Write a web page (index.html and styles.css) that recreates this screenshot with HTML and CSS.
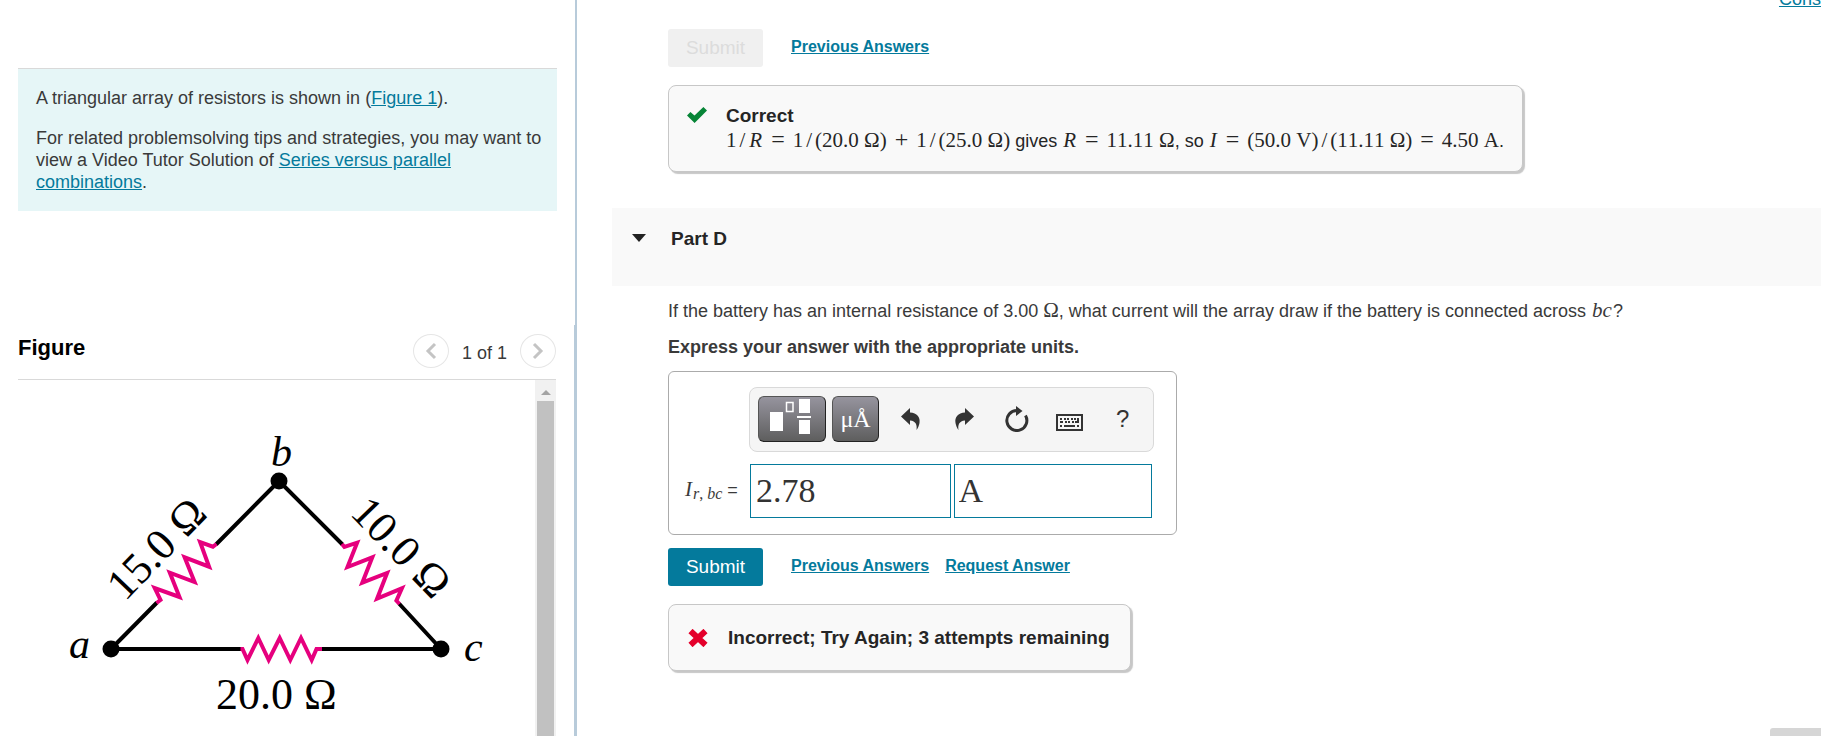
FILE: index.html
```html
<!DOCTYPE html>
<html lang="en">
<head>
  <meta charset="UTF-8" />
  <meta name="viewport" content="width=device-width, initial-scale=1" />
  <title>Resistor array</title>
  <link rel="stylesheet" href="styles.css">
</head>
<body>
  <aside class="side">
    <section class="intro-pane">
      <div class="intro">
        <p>A triangular array of resistors is shown in (<a href="#figure">Figure 1</a>).</p>
        <p>For related problemsolving tips and strategies, you may want to view a Video Tutor Solution of <a href="#video">Series versus parallel combinations</a>.</p>
      </div>
    </section>
    <section class="figure-pane" id="figure">
      <div class="figure-head">
        <h2>Figure</h2>
        <div class="pager">
          <button class="round" aria-label="Previous figure">
            <svg width="12" height="18" viewBox="0 0 12 18"><path d="M10 2 3 9l7 7" /></svg>
          </button>
          <span>1 of 1</span>
          <button class="round" aria-label="Next figure">
            <svg width="12" height="18" viewBox="0 0 12 18"><path d="m2 2 7 7-7 7" /></svg>
          </button>
        </div>
      </div>
      <div class="figure-body">
        <svg class="circuit" viewBox="18 380 517 360" width="517" height="360" role="img" aria-label="Triangle of resistors">
          <g class="wire">
            <path d="M111 649 157 602.500M216 544.500 279 481M279 481 342.500 544.500M399 603.500 441 649M111 649H241M321.500 649H441" />
          </g>
          <g class="resistor">
            <path d="M156.500 603 160.500 600 154.700 588 179.500 597 169.800 572.700 194.600 582 184.600 557.300 209.100 566.700 200.100 542 212.900 546.700 216.500 544" />
            <path d="M342 544 344.400 547 357.100 542.700 347.500 567 372.300 557.300 362.300 582.700 387.100 573 377.100 598.700 401.900 588.300 396.400 600.700 399.500 604" />
            <path d="M240.500 649H242.500L247.500 660 258.300 638 268.700 660 279.700 638 290.300 660 301 638 311.700 660 316.500 649H322" />
          </g>
          <circle cx="111" cy="649" r="8.500" />
          <circle cx="279" cy="481" r="8.500" />
          <circle cx="441" cy="649" r="8.500" />
          <g class="node">
            <text x="69" y="658">a</text>
            <text x="271" y="466">b</text>
            <text x="464" y="661">c</text>
          </g>
          <g class="ohms">
            <text x="216" y="709">20.0 Ω</text>
            <text transform="translate(125 602) rotate(-46)">15.0 Ω</text>
            <text transform="translate(349 514) rotate(46)">10.0 Ω</text>
          </g>
        </svg>
        <div class="scrollbar">
          <div class="scroll-up"></div>
          <div class="scroll-thumb"></div>
        </div>
      </div>
    </section>
  </aside>

  <main class="main">
    <div class="topbar"><a href="#constants">Cons</a></div>

    <section class="part">
      <div class="actions">
        <button class="submit" disabled>Submit</button>
        <a href="#previous-c">Previous Answers</a>
      </div>
      <div class="feedback">
        <svg class="mark" width="20" height="16" viewBox="0 0 20 16"><path fill="#078537" d="M0 8.500 3.400 5 7.500 8.600 16.400 0 20 3.500 7.600 16z" /></svg>
        <div>
          <strong>Correct</strong>
          <p><span class="math">1<b class="over">/</b><i>R</i><b class="op">=</b>1<b class="over">/</b>(20.0&nbsp;Ω)<b class="op">+</b>1<b class="over">/</b>(25.0&nbsp;Ω)</span> gives <span class="math"><i>R</i><b class="op">=</b>11.11&nbsp;Ω</span>, so <span class="math"><i>I</i><b class="op">=</b>(50.0&nbsp;V)<b class="over">/</b>(11.11&nbsp;Ω)<b class="op">=</b>4.50&nbsp;A</span>.</p>
        </div>
      </div>
    </section>

    <header class="part-head">
      <svg width="14" height="8" viewBox="0 0 14 8"><path fill="#222" d="M0 0h14L7 8z" /></svg>
      <h2>Part D</h2>
    </header>

    <section class="part">
      <p class="question">If the battery has an internal resistance of 3.00 <span class="math">Ω</span>, what current will the array draw if the battery is connected across <span class="math"><i>bc</i></span>?</p>
      <p class="hint">Express your answer with the appropriate units.</p>

      <form class="answer">
        <div class="toolbar">
          <button type="button" class="tool tool-wide" aria-label="Templates">
            <svg width="44" height="38" viewBox="0 0 44 38">
              <path fill="#fff" d="M0 15h13v19H0zM29 2h11v14H29zM27 19h14v2H27zM29 23h11v14H29z" />
              <path fill="none" stroke="#fff" stroke-width="1.500" d="M16.500 5.500h6.500v9h-6.500z" />
            </svg>
          </button>
          <button type="button" class="tool" aria-label="Units">μÅ</button>
          <div class="icons">
            <button type="button" class="icon" aria-label="Undo">
              <svg width="20" height="22" viewBox="0 0 20 22"><path d="M0 8.500 9 0v4.500c7 .500 10.500 4.500 9.500 10.500-.400 2.500-1.500 5-3 7 .800-5-.500-9-6.500-9.500v4.500z" /></svg>
            </button>
            <button type="button" class="icon" aria-label="Redo">
              <svg width="20" height="22" viewBox="0 0 20 22"><path d="M20 8.500 11 0v4.500C4 5 .500 9 1.500 15c.400 2.500 1.500 5 3 7-.800-5 .500-9 6.500-9.500v4.500z" /></svg>
            </button>
            <button type="button" class="icon" aria-label="Reset">
              <svg width="24" height="26" viewBox="0 0 24 26"><path fill="none" stroke="#333" stroke-width="3" d="M12 4.500a10 10 0 1 0 8.500 5" /><path d="M11 0 17.500 5 11 10z" /></svg>
            </button>
            <button type="button" class="icon icon-keys" aria-label="Keyboard">
              <svg width="27" height="17" viewBox="0 0 27 17">
                <path fill="none" stroke="#333" stroke-width="2" d="M1 1h25v15H1z" />
                <path d="M4 4h2v2H4zM8 4h2v2H8zM11 4h2v2h-2zM15 4h2v2h-2zM18 4h2v2h-2zM21 4h2v5h-4V7h2zM4 7h3v2H4zM9 7h2v2H9zM12 7h2v2h-2zM16 7h2v2h-2zM4 11h2v2H4zM8 11h11v2H8zM21 11h2v2h-2z" />
              </svg>
            </button>
            <button type="button" class="icon" aria-label="Help">?</button>
          </div>
        </div>
        <div class="entry">
          <label for="value"><span class="math"><i>I</i><sub><i>r</i>, <i>bc</i></sub></span> =</label>
          <input type="text" id="value" value="2.78">
          <input type="text" id="units" value="A" aria-label="Units">
        </div>
      </form>

      <div class="actions">
        <button class="submit">Submit</button>
        <a href="#previous-d">Previous Answers</a>
        <a href="#request">Request Answer</a>
      </div>
      <div class="feedback feedback-wrong">
        <svg class="mark" width="20" height="18" viewBox="0 0 20 18"><path stroke="#e4002b" stroke-width="6" d="M2.500 2 17.500 16M17.500 2 2.500 16" /></svg>
        <strong>Incorrect; Try Again; 3 attempts remaining</strong>
      </div>
    </section>

    <footer class="bottom"><button class="next" aria-label="Next"></button></footer>
  </main>
</body>
</html>
```
FILE: styles.css
```css
:root {
  --teal: #047a9c;
  --text: #3a3a3a;
  --line: #d9d9d9;
  --divider: #b8cbda;
  --panel: #f9f9f9;
}
* {
  box-sizing: border-box;
}
body {
  margin: 0;
  display: flex;
  height: 100vh;
  overflow: hidden;
  background: #fff;
  color: var(--text);
  font: 18px/22px "Liberation Sans", Arial, sans-serif;
}
p, h2 {
  margin: 0;
}
a {
  color: var(--teal);
}
button {
  font-family: inherit;
  border: 0;
  padding: 0;
}

/* left column */
.side {
  flex: 0 0 577px;
  display: flex;
  flex-direction: column;
}
.intro-pane {
  height: 325px;
  padding: 68px 18px 0;
  border-right: 2px solid var(--divider);
}
.intro {
  padding: 18px 8px 18px 18px;
  border-top: 1px solid var(--line);
  background: #e6f6f7;
}
.intro p + p {
  margin-top: 18px;
}
.figure-pane {
  flex: 1;
  min-height: 0;
  display: flex;
  flex-direction: column;
  padding: 0 18px;
  border-right: 3px solid var(--divider);
}
.figure-head {
  display: flex;
  justify-content: space-between;
  height: 55px;
  padding-top: 9px;
  border-bottom: 1px solid var(--line);
}
.figure-head h2 {
  color: #000;
  font-size: 22px;
  line-height: 28px;
}
.pager {
  display: flex;
  gap: 13px;
}
.pager span {
  padding-top: 8px;
}
.round {
  display: flex;
  align-items: center;
  justify-content: center;
  width: 36px;
  height: 34px;
  border: 1px solid #e6e6e6;
  border-radius: 50%;
  background: #fff;
}
.round path {
  fill: none;
  stroke: #c4c4c4;
  stroke-width: 3;
}
.figure-body {
  flex: 1;
  min-height: 0;
  display: flex;
  justify-content: space-between;
  overflow: hidden;
}
.circuit {
  flex: none;
}
.wire {
  stroke: #000;
  stroke-width: 4;
}
.resistor {
  fill: none;
  stroke: #e6007e;
  stroke-width: 4;
}
.node, .ohms {
  font: 44px "Liberation Serif", "Times New Roman", serif;
}
.node {
  font-size: 42px;
  font-style: italic;
}
.scrollbar {
  display: flex;
  flex-direction: column;
  width: 21px;
  padding: 0 2px;
  background: #f1f1f1;
}
.scroll-up {
  width: 0;
  margin: 10px auto 6px;
  border: 5px solid transparent;
  border-top: 0;
  border-bottom-color: #a3a3a3;
}
.scroll-thumb {
  flex: 1;
  background: #c1c1c1;
}

/* right column */
.main {
  flex: 1;
  min-width: 0;
  display: flex;
  flex-direction: column;
  padding-left: 35px;
}
.topbar {
  display: flex;
  align-items: flex-end;
  justify-content: flex-end;
  height: 10px;
  margin-bottom: 19px;
}
.part {
  padding-left: 56px;
}
.actions {
  display: flex;
  align-items: center;
  gap: 16px;
}
.actions a {
  font-size: 16px;
  font-weight: bold;
  line-height: 20px;
  padding-bottom: 2px;
}
.submit {
  width: 95px;
  height: 38px;
  margin-right: 12px;
  border-radius: 3px;
  background: var(--teal);
  color: #fff;
  font-size: 19px;
}
.submit:disabled {
  background: #f0f0f0;
  color: #dcdcdc;
}
.feedback {
  display: flex;
  gap: 19px;
  width: fit-content;
  margin-top: 18px;
  padding: 18px;
  border: 1px solid #c7c7c7;
  border-radius: 8px;
  background: var(--panel);
  box-shadow: 2px 2px 1px #c7c7c7;
  color: #252525;
}
.feedback strong {
  display: block;
  font-size: 19px;
  line-height: 24px;
}
.feedback p {
  line-height: 24px;
}
.mark {
  flex: none;
  margin-top: 3px;
}
.math {
  font-family: "Liberation Serif", "Times New Roman", serif;
  font-size: 21px;
  line-height: 22px;
  font-kerning: none;
}
.math i {
  padding: 0 1px;
}
.math sub i {
  padding: 0;
}
.op {
  margin: 0 8px;
  font-size: 24px;
  font-weight: normal;
}
.over {
  margin: 0 3px;
  font-weight: normal;
}
.part-head {
  display: flex;
  gap: 25px;
  height: 78px;
  margin-top: 36px;
  padding: 20px;
  background: var(--panel);
  color: #252525;
}
.part-head svg {
  margin-top: 6px;
}
.part-head h2 {
  font-size: 19px;
  line-height: 22px;
}
.question {
  margin-top: 13px;
}
.hint {
  margin-top: 14px;
  font-weight: bold;
}
.answer {
  width: 509px;
  margin: 13px 0;
  padding: 15px 22px 16px 15px;
  border: 1px solid #ababab;
  border-radius: 6px;
}
.toolbar {
  display: flex;
  height: 65px;
  margin-left: 65px;
  padding: 8px;
  border: 1px solid var(--line);
  border-radius: 8px;
  background: #f5f5f5;
}
.tool {
  flex: none;
  width: 47px;
  height: 46px;
  margin-right: 6px;
  border: 1px solid #555;
  border-right-color: #222;
  border-bottom-color: #222;
  border-radius: 6px;
  background: linear-gradient(#96949e, #5e5e5e);
  color: #fff;
  font: 24px "Liberation Serif", "Times New Roman", serif;
}
.tool-wide {
  width: 68px;
}
.icons {
  flex: 1;
  display: flex;
  margin-right: -4px;
}
.icon {
  display: flex;
  align-items: center;
  justify-content: center;
  flex: 1;
  height: 46px;
  background: none;
  color: #333;
  font-size: 24px;
}
.icon path {
  fill: #333;
}
.icon path[fill="none"] {
  fill: none;
}
.icon-keys {
  padding-top: 6px;
}
.entry {
  display: flex;
  align-items: center;
  gap: 3px;
  margin-top: 12px;
  padding-right: 2px;
}
.entry label {
  width: 63px;
  padding-bottom: 4px;
  white-space: nowrap;
}
.entry sub {
  font-size: 16px;
  line-height: 0;
  vertical-align: -3px;
}
.entry input {
  flex: 1;
  min-width: 0;
  height: 54px;
  padding: 0 5px;
  border: 1px solid var(--teal);
  border-radius: 0;
  background: #fff;
  color: #333;
  font: 34px "Liberation Serif", "Times New Roman", serif;
}
.entry input + input {
  padding: 0 4px;
}
.feedback-wrong {
  gap: 20px;
  padding: 21px 20px 20px 19px;
}
.bottom {
  display: flex;
  justify-content: flex-end;
  height: 8px;
  margin-top: auto;
}
.next {
  width: 51px;
  border-radius: 3px 0 0 0;
  background: #d6d6d6;
}
```
